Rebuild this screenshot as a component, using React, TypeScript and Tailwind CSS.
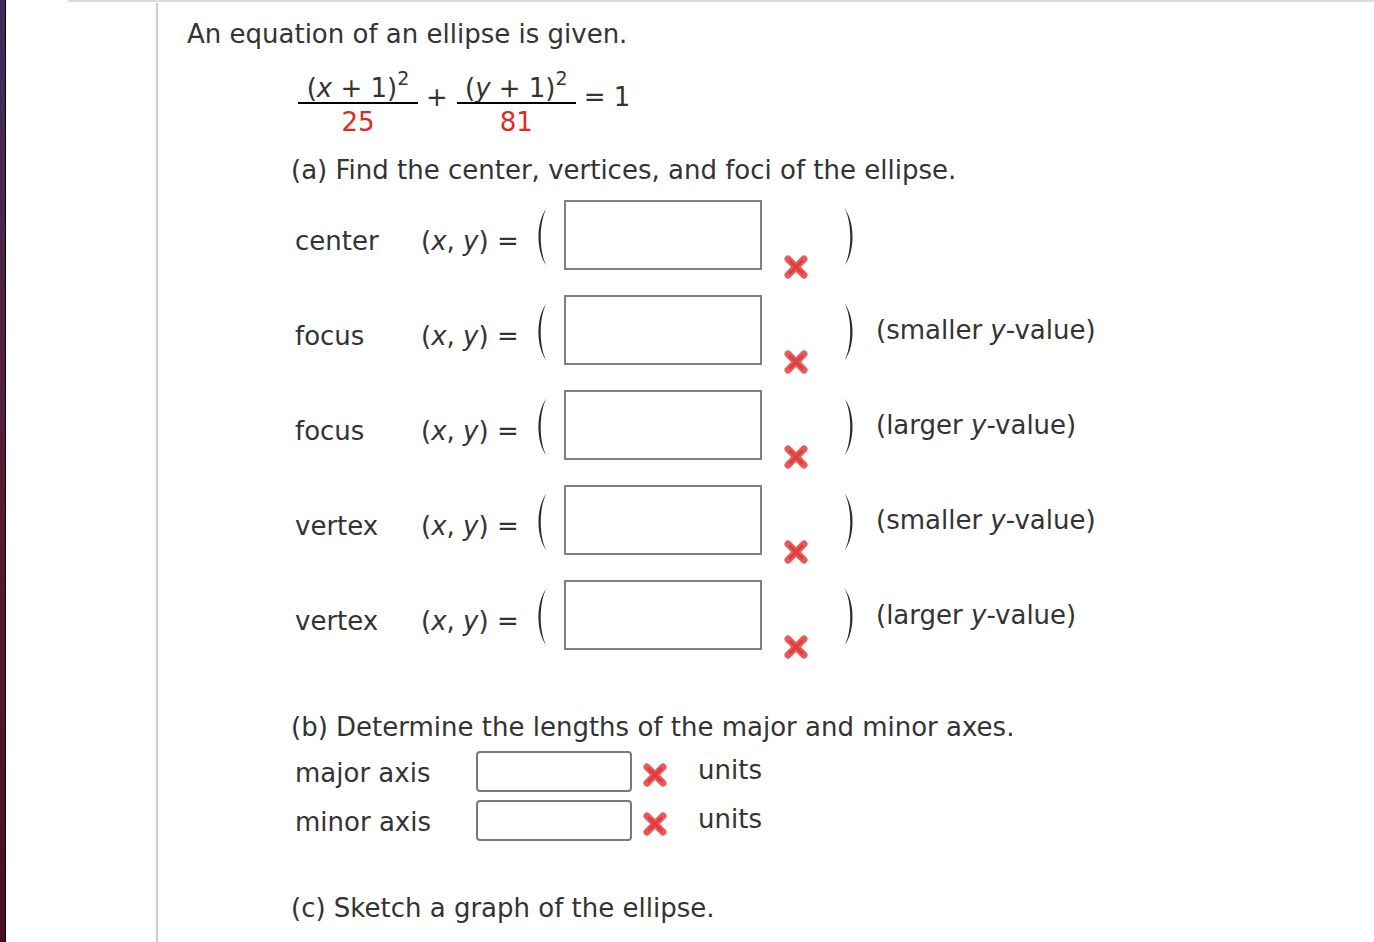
import React from "react";

const LParen = () => (
  <svg width="14" height="58" viewBox="0 0 14 58" className="shrink-0 mt-[8px]">
    <path d="M12.5 0.5 C1.8 14, 1.8 44, 12.5 57.5 C4.8 44, 4.8 14, 12.5 0.5 Z" fill="#2b2b2b" />
  </svg>
);

const RParen = () => (
  <svg width="14" height="58" viewBox="0 0 14 58" className="shrink-0 mt-[8px]">
    <path d="M1.5 0.5 C12.2 14, 12.2 44, 1.5 57.5 C9.2 44, 9.2 14, 1.5 0.5 Z" fill="#2b2b2b" />
  </svg>
);

const XMark = ({ className }: { className?: string }) => (
  <svg width="26" height="26" viewBox="0 0 26 26" className={className}>
    <g stroke="#e85a5a" strokeWidth="7" strokeLinecap="round">
      <line x1="5" y1="5" x2="21" y2="21" />
      <line x1="21" y1="5" x2="5" y2="21" />
    </g>
    <g stroke="#dc3f3f" strokeWidth="3" strokeLinecap="round">
      <line x1="7" y1="7" x2="19" y2="19" />
      <line x1="19" y1="7" x2="7" y2="19" />
    </g>
  </svg>
);

type RowProps = { label: string; note?: React.ReactNode };

const PointRow = ({ label, note }: RowProps) => (
  <div className="flex items-start h-[70px]">
    <div className="w-[126px] mt-[26px] leading-[30px]">{label}</div>
    <div className="w-[113px] mt-[26px] leading-[30px]">
      (<span className="italic">x</span>, <span className="italic">y</span>) =
    </div>
    <LParen />
    <div className="ml-[16px] w-[198px] h-[70px] border-2 border-[#808080] bg-white shrink-0" />
    <XMark className="ml-[21px] mt-[54px] shrink-0" />
    <div className="ml-[34px]">
      <RParen />
    </div>
    {note && <div className="ml-[19px] mt-[20px] leading-[30px] whitespace-nowrap">{note}</div>}
  </div>
);

const AxisRow = ({ label }: { label: string }) => (
  <div className="flex items-start h-[41px]">
    <div className="w-[181px] mt-[7px] leading-[30px]">{label}</div>
    <div className="w-[156px] h-[41px] rounded-[4px] border-2 border-[#7a7a7a] bg-white shrink-0" />
    <XMark className="ml-[10px] mt-[11px] shrink-0" />
    <div className="ml-[30px] mt-[4px] leading-[30px]">units</div>
  </div>
);

const Fraction = ({ v, den, w }: { v: string; den: string; w: string }) => (
  <div className={`flex flex-col ${w}`}>
    <div className="h-[26px] leading-[25px] text-center whitespace-nowrap">
      (<span className="italic">{v}</span> + 1)
      <span className="relative bottom-[12px] text-[19px] leading-none">2</span>
    </div>
    <div className="border-t-2 border-black" />
    <div className="mt-[3px] leading-[30px] text-center text-[#e2291d]">{den}</div>
  </div>
);

export default function App() {
  return (
    <div className="flex w-[1374px] h-[942px] overflow-hidden bg-white font-['DejaVu_Sans','Verdana',sans-serif] text-[26px] text-[#333333]">
      <div className="w-[5px] shrink-0 bg-gradient-to-b from-[#3a2c5d] via-[#5a1b33] to-[#4a0f1f]" />
      <div className="w-[1px] shrink-0 bg-black" />
      <div className="flex-1 flex flex-col">
        <div className="ml-[61px] h-[3px] shrink-0 rounded-tl-[5px] border-t-2 border-[#dcdcdc]" />
        <div className="flex flex-1">
          <div className="w-[150px] shrink-0" />
          <div className="flex-1 border-l-2 border-[#cccccc] pl-[29px]">
            <div className="mt-[16px] leading-[30px]">An equation of an ellipse is given.</div>

            <div className="mt-[27px] ml-[111px] flex items-start">
              <Fraction v="x" den="25" w="w-[120px]" />
              <div className="ml-[8px] mr-[9px] mt-[6px] leading-[30px]">+</div>
              <Fraction v="y" den="81" w="w-[119px]" />
              <div className="ml-[8px] mt-[6px] leading-[30px] whitespace-nowrap">= 1</div>
            </div>

            <div className="ml-[104px]">
              <div className="mt-[18px] leading-[30px]">
                (a) Find the center, vertices, and foci of the ellipse.
              </div>

              <div className="mt-[15px] pl-[4px] flex flex-col gap-[25px]">
                <PointRow label="center" />
                <PointRow
                  label="focus"
                  note={
                    <>
                      (smaller <span className="italic">y</span>-value)
                    </>
                  }
                />
                <PointRow
                  label="focus"
                  note={
                    <>
                      (larger <span className="italic">y</span>-value)
                    </>
                  }
                />
                <PointRow
                  label="vertex"
                  note={
                    <>
                      (smaller <span className="italic">y</span>-value)
                    </>
                  }
                />
                <PointRow
                  label="vertex"
                  note={
                    <>
                      (larger <span className="italic">y</span>-value)
                    </>
                  }
                />
              </div>

              <div className="mt-[62px] leading-[30px]">
                (b) Determine the lengths of the major and minor axes.
              </div>
              <div className="mt-[9px] pl-[4px] flex flex-col gap-[8px]">
                <AxisRow label="major axis" />
                <AxisRow label="minor axis" />
              </div>

              <div className="mt-[52px] leading-[30px]">(c) Sketch a graph of the ellipse.</div>
            </div>
          </div>
        </div>
      </div>
    </div>
  );
}
